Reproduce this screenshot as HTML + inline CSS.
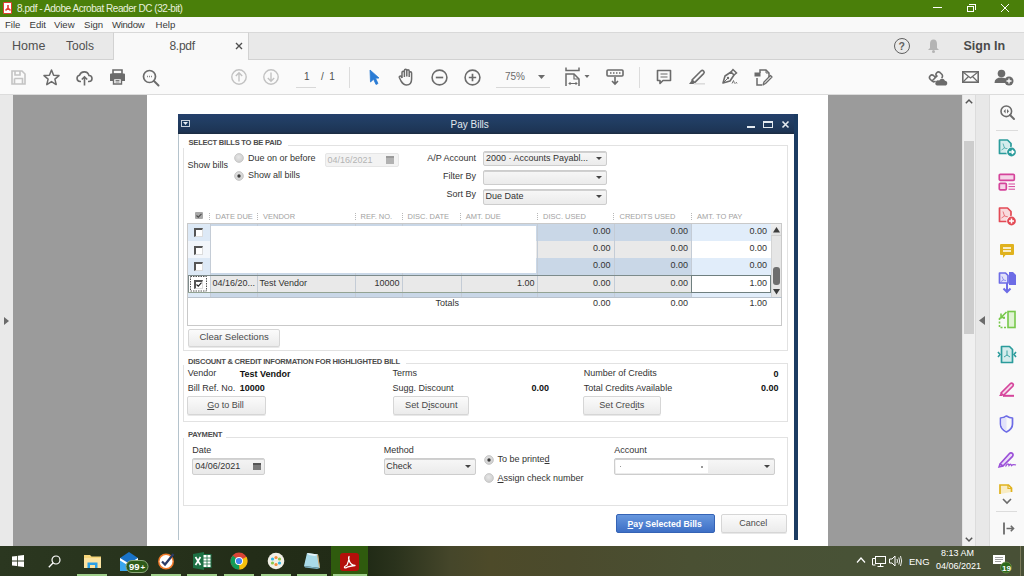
<!DOCTYPE html>
<html><head><meta charset="utf-8">
<style>
*{box-sizing:border-box;margin:0;padding:0}
html,body{width:1024px;height:576px;overflow:hidden;background:#f9f9f9;font-family:"Liberation Sans",sans-serif}
.a{position:absolute}
.t{position:absolute;white-space:nowrap;line-height:1}
svg{position:absolute;overflow:visible}
</style></head><body>
<!-- title bar -->
<div class="a" style="left:0;top:0;width:1024px;height:17px;background:#4a7f0a"></div>
<div class="a" style="left:3px;top:2px;width:9px;height:12px;background:#fff;border:1.5px solid #e03c31;border-radius:1px"></div>
<svg style="left:4px;top:4px" width="8" height="8" viewBox="0 0 8 8"><path d="M4 1 L4 4 M4 4 L1.5 6.5 M4 4 L6.5 6.5" stroke="#e03c31" stroke-width="1.6" fill="none"/></svg>
<div class="t" style="left:17px;top:4px;font-size:10px;color:#e8f0de;letter-spacing:-0.45px">8.pdf - Adobe Acrobat Reader DC (32-bit)</div>
<div class="a" style="left:933px;top:7px;width:9px;height:1px;background:#fff"></div>
<div class="a" style="left:967px;top:6px;width:7px;height:6px;border:1px solid #fff"></div>
<div class="a" style="left:969px;top:4px;width:7px;height:6px;border-top:1px solid #fff;border-right:1px solid #fff"></div>
<svg style="left:1001px;top:4px" width="8" height="8" viewBox="0 0 8 8"><path d="M0 0L8 8M8 0L0 8" stroke="#fff" stroke-width="1"/></svg>
<!-- menu bar -->
<div class="a" style="left:0;top:17px;width:1024px;height:15px;background:#f9f9f9"></div>
<div class="t" style="left:5px;top:20.2px;font-size:9.6px;color:#3a3a3a">File</div>
<div class="t" style="left:29.5px;top:20.2px;font-size:9.6px;color:#3a3a3a">Edit</div>
<div class="t" style="left:54px;top:20.2px;font-size:9.6px;color:#3a3a3a">View</div>
<div class="t" style="left:84px;top:20.2px;font-size:9.6px;color:#3a3a3a">Sign</div>
<div class="t" style="left:112px;top:20.2px;font-size:9.6px;color:#3a3a3a;letter-spacing:-0.3px">Window</div>
<div class="t" style="left:155.5px;top:20.2px;font-size:9.6px;color:#3a3a3a">Help</div>
<!-- tab bar -->
<div class="a" style="left:0;top:32px;width:1024px;height:28px;background:#e9e9e9;border-top:1px solid #d9d9d9;border-bottom:1px solid #d2d2d2"></div>
<div class="a" style="left:113px;top:32px;width:136px;height:28px;background:#f9f9f9;border-left:1px solid #d2d2d2;border-right:1px solid #d2d2d2;border-top:1px solid #d9d9d9"></div>
<div class="t" style="left:12px;top:40px;font-size:12.5px;color:#505050">Home</div>
<div class="t" style="left:66px;top:40px;font-size:12px;color:#505050">Tools</div>
<div class="t" style="left:169.5px;top:40px;font-size:12px;color:#505050;letter-spacing:-0.3px">8.pdf</div>
<svg style="left:236px;top:43px" width="6" height="6" viewBox="0 0 6 6"><path d="M0 0L6 6M6 0L0 6" stroke="#505050" stroke-width="1.4"/></svg>
<div class="a" style="left:894px;top:38px;width:16px;height:16px;border:1.5px solid #606060;border-radius:50%"></div>
<div class="t" style="left:898.5px;top:40.5px;font-size:10.5px;font-weight:700;color:#606060">?</div>
<svg style="left:927px;top:39px" width="13" height="14" viewBox="0 0 13 14"><path d="M6.5 0.5C4 0.5 3 2.5 3 5L3 9L1 11L12 11L10 9L10 5C10 2.5 9 0.5 6.5 0.5Z" fill="#b4b4b4"/><circle cx="6.5" cy="12.5" r="1.5" fill="#b4b4b4"/></svg>
<div class="t" style="left:963.5px;top:40px;font-size:12.5px;font-weight:700;color:#4b4b4b;letter-spacing:0px">Sign In</div>
<!-- toolbar -->
<div class="a" style="left:0;top:60px;width:1024px;height:35px;background:#fafafa;border-bottom:1px solid #dcdcdc"></div>

<!-- toolbar icons -->
<svg style="left:11px;top:70px" width="15" height="15" viewBox="0 0 15 15"><path d="M1 1H11L14 4V14H1Z M4 1V5H9V1 M3.5 8.5H11.5V14 M3.5 8.5V14" stroke="#c4c4c4" stroke-width="1.6" fill="none"/></svg>
<svg style="left:43px;top:69px" width="17" height="17" viewBox="0 0 17 17"><path d="M8.5 1L10.6 6.3L16 6.6L11.9 10.1L13.2 15.6L8.5 12.6L3.8 15.6L5.1 10.1L1 6.6L6.4 6.3Z" stroke="#6b6b6b" stroke-width="1.5" fill="none" stroke-linejoin="round"/></svg>
<svg style="left:76px;top:70px" width="17" height="16" viewBox="0 0 17 16"><path d="M5 11.5H4A3.2 3.2 0 0 1 3.5 5.2A5 5 0 0 1 13 5.5A3 3 0 0 1 13 11.5H12" stroke="#6b6b6b" stroke-width="1.6" fill="none"/><path d="M8.5 15.5V7M5.8 9.5L8.5 6.8L11.2 9.5" stroke="#6b6b6b" stroke-width="1.6" fill="none"/></svg>
<svg style="left:109px;top:69px" width="17" height="16" viewBox="0 0 17 16"><path d="M4 1H13V5H4Z" stroke="#6b6b6b" stroke-width="1.6" fill="none"/><path d="M1 5.5Q1 4.5 2 4.5H15Q16 4.5 16 5.5V12H13V9H4V12H1Z" fill="#6b6b6b"/><path d="M4.5 9.5H12.5V15H4.5Z" stroke="#6b6b6b" stroke-width="1.4" fill="none"/><path d="M6.5 11.5H10.5M6.5 13H10.5" stroke="#6b6b6b" stroke-width="0.9"/></svg>
<svg style="left:142px;top:69px" width="18" height="18" viewBox="0 0 18 18"><circle cx="7.5" cy="7.5" r="6" stroke="#6b6b6b" stroke-width="1.7" fill="none"/><path d="M12 12L16.5 16.5" stroke="#6b6b6b" stroke-width="2" stroke-linecap="round"/><path d="M5 7.5H5.8M7.1 7.5H7.9M9.2 7.5H10" stroke="#6b6b6b" stroke-width="1.3"/></svg>
<svg style="left:231px;top:69px" width="16" height="16" viewBox="0 0 16 16"><circle cx="8" cy="8" r="7.2" stroke="#c2c2c2" stroke-width="1.4" fill="none"/><path d="M8 12.5V4M4.8 7L8 3.8L11.2 7" stroke="#c2c2c2" stroke-width="1.4" fill="none"/></svg>
<svg style="left:263px;top:69px" width="16" height="16" viewBox="0 0 16 16"><circle cx="8" cy="8" r="7.2" stroke="#c2c2c2" stroke-width="1.4" fill="none"/><path d="M8 3.5V12M4.8 9L8 12.2L11.2 9" stroke="#c2c2c2" stroke-width="1.4" fill="none"/></svg>
<div class="t" style="left:304px;top:72px;font-size:10px;color:#505050">1</div>
<div class="a" style="left:296px;top:87px;width:20px;height:1px;background:#d8d8d8"></div>
<div class="t" style="left:321px;top:72px;font-size:10px;color:#505050">/ &nbsp;1</div>
<div class="a" style="left:349px;top:67px;width:1px;height:21px;background:#dcdcdc"></div>
<svg style="left:369px;top:69px" width="11" height="16" viewBox="0 0 11 16"><path d="M1 1L10 9L6.5 9.2L9 14.5L7 15.5L4.6 10.2L1.5 13Z" fill="#2a7bd4" stroke="#2a7bd4" stroke-width="0.8" stroke-linejoin="round"/></svg>
<svg style="left:398px;top:68px" width="17" height="18" viewBox="0 0 17 18"><path d="M4 10V4.5A1.2 1.2 0 0 1 6.4 4.5V9M6.4 8V2.5A1.2 1.2 0 0 1 8.8 2.5V8.5M8.8 8V3A1.2 1.2 0 0 1 11.2 3V9M11.2 8.5V5A1.2 1.2 0 0 1 13.6 5V11C13.6 15 11.5 17 8.5 17C5.5 17 4.5 15.5 3 13L1.3 9.5A1.1 1.1 0 0 1 3.3 8.6L4 10" stroke="#6b6b6b" stroke-width="1.5" fill="none" stroke-linejoin="round"/></svg>
<svg style="left:431px;top:69px" width="17" height="17" viewBox="0 0 17 17"><circle cx="8.5" cy="8.5" r="7.4" stroke="#6b6b6b" stroke-width="1.6" fill="none"/><path d="M4.8 8.5H12.2" stroke="#6b6b6b" stroke-width="1.7"/></svg>
<svg style="left:464px;top:69px" width="17" height="17" viewBox="0 0 17 17"><circle cx="8.5" cy="8.5" r="7.4" stroke="#6b6b6b" stroke-width="1.6" fill="none"/><path d="M4.8 8.5H12.2M8.5 4.8V12.2" stroke="#6b6b6b" stroke-width="1.7"/></svg>
<div class="t" style="left:505px;top:72px;font-size:10px;color:#6b6b6b">75%</div>
<svg style="left:538px;top:75px" width="7" height="4" viewBox="0 0 7 4"><path d="M0 0H7L3.5 4Z" fill="#6b6b6b"/></svg>
<div class="a" style="left:496px;top:87px;width:54px;height:1px;background:#d8d8d8"></div>
<svg style="left:565px;top:67px" width="26" height="20" viewBox="0 0 26 20"><path d="M1 0.5V3.5H14V0.5" stroke="#6b6b6b" stroke-width="1.5" fill="none"/><path d="M1 19V7H9L14 12V19" stroke="#6b6b6b" stroke-width="1.5" fill="none"/><path d="M9 7V12H14" stroke="#6b6b6b" stroke-width="1.2" fill="none"/><path d="M4 16.5H12M5.5 15L4 16.5L5.5 18M10.5 15L12 16.5L10.5 18" stroke="#6b6b6b" stroke-width="1" fill="none"/><path d="M19.5 8H24.5L22 11Z" fill="#6b6b6b"/></svg>
<svg style="left:606px;top:69px" width="18" height="16" viewBox="0 0 18 16"><rect x="1" y="1" width="16" height="6" rx="1" stroke="#6b6b6b" stroke-width="1.6" fill="none"/><path d="M4 4H5.5M7 4H8.5M10 4H11.5M13 4H14.5" stroke="#6b6b6b" stroke-width="1.4"/><path d="M9 8V15M6 12L9 15L12 12" stroke="#6b6b6b" stroke-width="1.6" fill="none"/></svg>
<div class="a" style="left:639px;top:67px;width:1px;height:21px;background:#dcdcdc"></div>
<svg style="left:656px;top:69px" width="16" height="16" viewBox="0 0 16 16"><path d="M1.5 1.5H14.5V11.5H7L4 14.5V11.5H1.5Z" stroke="#6b6b6b" stroke-width="1.6" fill="none" stroke-linejoin="round"/><path d="M4.5 5H11.5M4.5 8H11.5" stroke="#6b6b6b" stroke-width="1.1"/></svg>
<svg style="left:688px;top:69px" width="18" height="16" viewBox="0 0 18 16"><path d="M4 11L13 2A1.8 1.8 0 0 1 15.6 4.6L6.6 13.6Z" stroke="#6b6b6b" stroke-width="1.6" fill="none" stroke-linejoin="round"/><path d="M4 11L1 15H5.5L6.6 13.6" fill="#6b6b6b"/><path d="M6 14.8H17" stroke="#dcdcdc" stroke-width="1.6"/></svg>
<svg style="left:721px;top:68px" width="18" height="17" viewBox="0 0 18 17"><path d="M2 15L4 8L10 4L13 7L9 13Z" stroke="#6b6b6b" stroke-width="1.6" fill="none" stroke-linejoin="round"/><path d="M10 4L12 1.5L15.5 5L13 7" stroke="#6b6b6b" stroke-width="1.5" fill="none"/><circle cx="7" cy="10" r="1.2" fill="#6b6b6b"/><path d="M2 15L6.2 10.8" stroke="#6b6b6b" stroke-width="1"/><path d="M11 15.5L12.5 12.5L13.5 15.5M14.5 15.5Q15.5 13 16 15.5" stroke="#6b6b6b" stroke-width="0.9" fill="none"/></svg>
<svg style="left:754px;top:69px" width="19" height="18" viewBox="0 0 19 18"><path d="M6 4V1H12L15 4V8" stroke="#6b6b6b" stroke-width="1.5" fill="none"/><path d="M12 1V4H15" stroke="#6b6b6b" stroke-width="1" fill="none"/><rect x="0.5" y="3.5" width="6" height="4" fill="#6b6b6b"/><path d="M3 9V16H8" stroke="#6b6b6b" stroke-width="1.5" fill="none"/><path d="M9 16L10 13L16.5 6.5L18 8L11.5 14.5Z" stroke="#6b6b6b" stroke-width="1.3" fill="none" stroke-linejoin="round"/></svg>
<svg style="left:928px;top:69px" width="19" height="17" viewBox="0 0 19 17"><path d="M7.5 6.5L5.5 4.5A2.5 2.5 0 0 0 2 8L4 10A2.5 2.5 0 0 0 7.5 10M4.5 9.5L9.5 4.5M6.5 7L8.5 5A2.5 2.5 0 0 1 12 1.5L14 3.5A2.5 2.5 0 0 1 13.5 7" stroke="#6b6b6b" stroke-width="1.6" fill="none" transform="translate(0,2)"/><path d="M9 16.5H18A2.5 2.5 0 0 0 17 11.8A3.2 3.2 0 0 0 11.2 11.5A2.5 2.5 0 0 0 9 16.5Z" fill="#6b6b6b"/></svg>
<svg style="left:962px;top:71px" width="17" height="12" viewBox="0 0 17 12"><rect x="0.8" y="0.8" width="15.4" height="10.4" stroke="#6b6b6b" stroke-width="1.6" fill="none"/><path d="M1 1L8.5 7L16 1M1 11L6.5 5.5M16 11L10.5 5.5" stroke="#6b6b6b" stroke-width="1.2" fill="none"/></svg>
<svg style="left:994px;top:69px" width="20" height="17" viewBox="0 0 20 17"><circle cx="7.5" cy="4.5" r="3.8" fill="#6b6b6b"/><path d="M0.5 14Q0.5 8.5 7.5 8.5Q11 8.5 12.5 10L11 14Z" fill="#6b6b6b"/><circle cx="15" cy="12" r="4.5" fill="#6b6b6b"/><path d="M15 9.5V14.5M12.5 12H17.5" stroke="#fff" stroke-width="1.3"/></svg>

<!-- document area -->
<div class="a" style="left:0;top:95px;width:13px;height:451px;background:#e9e9e9"></div>
<svg style="left:4px;top:316.5px" width="5" height="8" viewBox="0 0 5 8"><path d="M0 0L5 4L0 8Z" fill="#6b6b6b"/></svg>
<div class="a" style="left:13px;top:95px;width:949px;height:451px;background:#9b9b9b"></div>
<div class="a" style="left:147px;top:95px;width:681px;height:451px;background:#fff"></div>
<div class="a" style="left:962px;top:95px;width:14px;height:451px;background:#f0f0f0;border-left:1px solid #e4e4e4;border-right:1px solid #dcdcdc"></div>
<div class="a" style="left:964px;top:141px;width:10px;height:193px;background:#cdcdcd"></div>
<svg style="left:965px;top:99px" width="8" height="5" viewBox="0 0 8 5"><path d="M0.8 4.2L4 1L7.2 4.2" stroke="#555" stroke-width="1.5" fill="none"/></svg>
<svg style="left:965px;top:537px" width="8" height="5" viewBox="0 0 8 5"><path d="M0.8 0.8L4 4L7.2 0.8" stroke="#555" stroke-width="1.5" fill="none"/></svg>
<div class="a" style="left:976px;top:95px;width:14px;height:451px;background:#e8e8e8;border-right:1px solid #dcdcdc"></div>
<svg style="left:979px;top:316px" width="6" height="9" viewBox="0 0 6 9"><path d="M6 0L0 4.5L6 9Z" fill="#6b6b6b"/></svg>
<div class="a" style="left:990px;top:96px;width:34px;height:450px;background:#f9f9f9"></div>
<svg style="left:1000px;top:105px" width="15" height="15" viewBox="0 0 15 15"><circle cx="6.3" cy="6.3" r="5.3" stroke="#6b6b6b" stroke-width="1.6" fill="none"/><path d="M10 10L14 14" stroke="#6b6b6b" stroke-width="2" stroke-linecap="round"/><path d="M5.6 4L3.6 6.3L5.6 8.6ZM7 4L9 6.3L7 8.6Z" fill="#6b6b6b"/></svg>
<div class="a" style="left:996px;top:130px;width:22px;height:1px;background:#dcdcdc"></div>
<svg style="left:998px;top:139px" width="19" height="18" viewBox="0 0 19 18"><path d="M1.5 1H9.5L13 4.5V14.5H1.5Z" stroke="#2b9c9c" stroke-width="1.7" fill="#d4ecec" stroke-linejoin="round"/><path d="M5 4.5L6.5 9L3.5 11M6.5 9L10 10" stroke="#2b9c9c" stroke-width="0.7" fill="none"/><circle cx="13.5" cy="13" r="5.2" fill="#f9f9f9"/><circle cx="13.5" cy="13" r="4.4" fill="#2b9c9c"/><path d="M11 13H15.5M13.8 11L15.8 13L13.8 15" stroke="#fff" stroke-width="1.4" fill="none"/></svg>
<svg style="left:998px;top:173px" width="18" height="18" viewBox="0 0 18 18"><rect x="1.3" y="1.3" width="15" height="6" rx="1" stroke="#d5449b" stroke-width="1.7" fill="#f5d5e8"/><rect x="1.3" y="10.3" width="7" height="6.5" rx="1" stroke="#d5449b" stroke-width="1.7" fill="#f5d5e8"/><path d="M10.5 11H17M10.5 13.6H17M10.5 16.2H17" stroke="#d5449b" stroke-width="1"/></svg>
<svg style="left:998px;top:207px" width="19" height="18" viewBox="0 0 19 18"><path d="M1.5 1H9.5L13 4.5V14.5H1.5Z" stroke="#e34a55" stroke-width="1.7" fill="#f8dadd" stroke-linejoin="round"/><path d="M5 4.5L6.5 9L3.5 11M6.5 9L10 10" stroke="#e34a55" stroke-width="0.7" fill="none"/><circle cx="13.5" cy="14" r="5.2" fill="#f9f9f9"/><circle cx="13.5" cy="14" r="4.4" fill="#e34a55"/><path d="M11 14H16M13.5 11.5V16.5" stroke="#fff" stroke-width="1.5"/></svg>
<svg style="left:999px;top:243px" width="16" height="17" viewBox="0 0 16 17"><path d="M1 2Q1 1 2 1H14Q15 1 15 2V11Q15 12 14 12H6.5L4 15V12H2Q1 12 1 11Z" fill="#e0b21e"/><path d="M4 5H12M4 8H12" stroke="#fff" stroke-width="1.4"/></svg>
<svg style="left:998px;top:271px" width="19" height="24" viewBox="0 0 19 24"><path d="M1.5 2H7.5L10 4.5V12H1.5Z" stroke="#6d6ce6" stroke-width="1.7" fill="#e2e2fa" stroke-linejoin="round"/><path d="M4 5.5L5.5 9L3 10.5M5.5 9L8 9.5" stroke="#6d6ce6" stroke-width="0.7" fill="none"/><path d="M11 1H15L18 4V14H11Z" fill="#6d6ce6"/><path d="M9 12V21M5.5 17.5L9 21L12.5 17.5" stroke="#6d6ce6" stroke-width="2" fill="none"/></svg>
<svg style="left:998px;top:310px" width="18" height="19" viewBox="0 0 18 19"><rect x="10" y="1.5" width="7" height="16" stroke="#77c84a" stroke-width="1.6" fill="#e0f3d4"/><path d="M1.5 8V17.5H8M1.5 8H8" stroke="#77c84a" stroke-width="1.6" stroke-dasharray="2 1.5" fill="none"/><path d="M8.5 2L3 7.5M3 3.5V7.5H7" stroke="#77c84a" stroke-width="1.6" fill="none"/></svg>
<svg style="left:997px;top:345px" width="20" height="19" viewBox="0 0 20 19"><path d="M4.5 1.5H12.5L15.5 4.5V17.5H4.5Z" stroke="#2b9c9c" stroke-width="1.7" fill="#d4ecec" stroke-linejoin="round"/><path d="M1 7L3 9.5L1 12M19 7L17 9.5L19 12" stroke="#2b9c9c" stroke-width="1.6" fill="none"/><path d="M10 5.5L10 10L7 12M10 10L13 12" stroke="#2b9c9c" stroke-width="0.9" fill="none"/></svg>
<svg style="left:998px;top:380px" width="17" height="17" viewBox="0 0 17 17"><path d="M3 13L12.5 3.5A1.8 1.8 0 0 1 15 6L5.5 15.5Z" stroke="#d5449b" stroke-width="1.7" fill="#f5d5e8" stroke-linejoin="round"/><path d="M3 13L1 16H4.5" fill="#d5449b"/><path d="M5 15.8H16" stroke="#d5449b" stroke-width="2"/></svg>
<svg style="left:999px;top:415px" width="15" height="18" viewBox="0 0 15 18"><path d="M7.5 1Q4.5 3 1.5 3V9Q1.5 14 7.5 17Q13.5 14 13.5 9V3Q10.5 3 7.5 1Z" stroke="#6d6ce6" stroke-width="1.7" fill="none" stroke-linejoin="round"/><path d="M7.5 1.8V16.2Q2.3 13.5 2.3 9V3.8Q5 3.8 7.5 1.8Z" fill="#e2e2fa"/></svg>
<svg style="left:998px;top:450px" width="19" height="18" viewBox="0 0 19 18"><path d="M2 14L11.5 3.5A2 2 0 0 1 14.5 6.3L5 16Z" stroke="#9b4fd8" stroke-width="1.7" fill="#eadcf8" stroke-linejoin="round"/><path d="M2 14L1 17L5 16" stroke="#9b4fd8" stroke-width="1.5" fill="none"/><path d="M7.5 16.5Q10 12 11 15.5Q12.5 13 13.5 15.5Q15 14 18 15" stroke="#9b4fd8" stroke-width="1.3" fill="none"/></svg>
<svg style="left:999px;top:484px" width="16" height="10" viewBox="0 0 16 10"><path d="M1 10V1H9.5L12.5 4V8" stroke="#e0b21e" stroke-width="1.7" fill="#f8ecc4"/><path d="M9 1V4.5H12.5" stroke="#e0b21e" stroke-width="1.2" fill="none"/></svg>
<div class="a" style="left:990px;top:494px;width:34px;height:14px;background:#f9f9f9"></div>
<svg style="left:1002px;top:498px" width="10" height="6" viewBox="0 0 10 6"><path d="M1 1L5 5L9 1" stroke="#6b6b6b" stroke-width="1.6" fill="none"/></svg>
<div class="a" style="left:996px;top:511px;width:21px;height:1px;background:#dcdcdc"></div>
<svg style="left:1003px;top:522px" width="12" height="13" viewBox="0 0 12 13"><path d="M1 0.5V12.5" stroke="#6b6b6b" stroke-width="1.8"/><path d="M3.5 6.5H10.5M7.8 3.8L10.5 6.5L7.8 9.2" stroke="#6b6b6b" stroke-width="1.6" fill="none"/></svg>

<!-- taskbar -->
<div class="a" style="left:0;top:546px;width:1024px;height:30px;background:linear-gradient(90deg,#2b3720 0px,#28341d 120px,#232d18 250px,#212b16 368px,#2a321c 395px,#45462a 450px,#4d4a29 490px,#4b4b2d 570px,#4a5033 690px,#485236 850px,#485036 1024px)"></div>
<div class="a" style="left:331px;top:546px;width:37px;height:30px;background:#2f5b0e"></div>
<svg style="left:12px;top:555px" width="12" height="12" viewBox="0 0 12 12"><path d="M0 1.6L5 0.9V5.6H0ZM5.8 0.8L12 0V5.6H5.8ZM0 6.4H5V11.1L0 10.4ZM5.8 6.4H12V12L5.8 11.2Z" fill="#fff"/></svg>
<svg style="left:48px;top:555px" width="13" height="13" viewBox="0 0 13 13"><circle cx="8" cy="5" r="4" stroke="#fff" stroke-width="1.2" fill="none"/><path d="M5.2 7.8L0.8 12.2" stroke="#fff" stroke-width="1.3"/></svg>
<svg style="left:84px;top:554px" width="17" height="14" viewBox="0 0 17 14"><path d="M0 1H6L7.5 2.5H17V14H0Z" fill="#f6d67a"/><path d="M0 4H17V14H0Z" fill="#fbe3a0"/><path d="M3.5 14V8.5H13.5V14H11V11H6V14Z" fill="#2aa0e6"/></svg>
<div class="a" style="left:77px;top:574px;width:30px;height:2px;background:#9fcf8a"></div>
<svg style="left:120px;top:552px" width="30" height="22" viewBox="0 0 30 22"><path d="M0 6L9 0L18 6V17H0Z" fill="#1a73c8"/><path d="M0 7L9 12.5L18 7V19H0Z" fill="#3aa6ee"/><path d="M0 6L9 11.5L18 6V8.5L9 14L0 8.5Z" fill="#fff"/><rect x="6" y="8.5" width="22" height="12" rx="6" fill="#2e5a18" stroke="#8ba67a" stroke-width="1"/><text x="9" y="18" font-family="Liberation Sans" font-size="9.5" font-weight="700" fill="#fff">99</text><text x="20.5" y="18" font-family="Liberation Sans" font-size="8" font-weight="700" fill="#fff">+</text></svg>
<svg style="left:157px;top:552px" width="18" height="18" viewBox="0 0 18 18"><circle cx="9" cy="9.5" r="8" fill="#f07a2a"/><circle cx="9" cy="9.5" r="6.5" fill="#fff"/><path d="M5 9.5L8 12.5L16.5 2" stroke="#2a3a66" stroke-width="2.2" fill="none"/></svg>
<div class="a" style="left:151px;top:574px;width:30px;height:2px;background:#9fcf8a"></div>
<svg style="left:193px;top:552px" width="19" height="18" viewBox="0 0 19 18"><path d="M0 2L11 0V18L0 16Z" fill="#1d7044"/><rect x="10" y="2.5" width="8" height="13" fill="#fff" stroke="#1d7044" stroke-width="1"/><path d="M10 6H18M10 9H18M10 12H18M14 2.5V15.5" stroke="#1d7044" stroke-width="0.8"/><path d="M2.5 5L7.5 13M7.5 5L2.5 13" stroke="#fff" stroke-width="1.7"/></svg>
<div class="a" style="left:187px;top:574px;width:30px;height:2px;background:#9fcf8a"></div>
<svg style="left:230px;top:552px" width="18" height="18" viewBox="0 0 18 18"><circle cx="9" cy="9" r="8.5" fill="#db4437"/><path d="M9 9L1.6 13.3A8.5 8.5 0 0 0 9.5 17.5Z" fill="#0f9d58"/><path d="M9 9L9.5 17.5A8.5 8.5 0 0 0 16.4 4.8Z" fill="#f4c20d"/><path d="M9 9L1.6 13.3A8.5 8.5 0 0 1 3 3.5Z" fill="#0f9d58"/><circle cx="9" cy="9" r="4" fill="#fff"/><circle cx="9" cy="9" r="3.1" fill="#4285f4"/></svg>
<div class="a" style="left:224px;top:574px;width:30px;height:2px;background:#9fcf8a"></div>
<svg style="left:267px;top:552px" width="18" height="18" viewBox="0 0 18 18"><circle cx="9" cy="9" r="8.3" fill="#f1efe6"/><circle cx="9" cy="5.5" r="1.6" fill="#f48c3c"/><circle cx="9" cy="12.5" r="1.6" fill="#f48c3c"/><circle cx="5.5" cy="7" r="1.6" fill="#31b8e8"/><circle cx="12.5" cy="7" r="1.6" fill="#8cc84b"/><circle cx="5.5" cy="11" r="1.6" fill="#8cc84b"/><circle cx="12.5" cy="11" r="1.6" fill="#31b8e8"/></svg>
<div class="a" style="left:261px;top:574px;width:30px;height:2px;background:#9fcf8a"></div>
<svg style="left:303px;top:552px" width="18" height="17" viewBox="0 0 18 17"><path d="M4 1L15 2.5L17 16L1 14Z" fill="#a9dbe8"/><path d="M4 1L15 2.5L12 4L6 3Z" fill="#e8f6fa"/><path d="M1 14L17 16L14 17L2 15.5Z" fill="#7fb5c8"/><path d="M15 2.5L17 16L16 15L14 3Z" fill="#d0a060"/></svg>
<div class="a" style="left:297px;top:574px;width:30px;height:2px;background:#9fcf8a"></div>
<div class="a" style="left:340px;top:553px;width:19px;height:18px;background:#b40f0a;border-radius:3px"></div>
<svg style="left:342px;top:555px" width="15" height="14" viewBox="0 0 15 14"><path d="M7 1.5Q6 3 7.5 6.5Q9 10 13 10.5Q10 10.8 6 11.8Q3.5 13.5 2.5 12.5Q2 11.5 5 10Q7 6 7 1.5Z" stroke="#fff" stroke-width="1.3" fill="none" stroke-linejoin="round"/></svg>
<div class="a" style="left:333px;top:574px;width:34px;height:2px;background:#9fcf8a"></div>
<svg style="left:856px;top:557px" width="10" height="6" viewBox="0 0 10 6"><path d="M1 5.5L5 1L9 5.5" stroke="#fff" stroke-width="1.2" fill="none"/></svg>
<svg style="left:872px;top:555px" width="14" height="13" viewBox="0 0 14 13"><rect x="3.5" y="1.5" width="10" height="7" stroke="#fff" stroke-width="1" fill="none"/><path d="M8.5 8.5V11M5.5 11.5H11.5M0.5 3.5H3.5M0.5 3.5V10H3.5" stroke="#fff" stroke-width="1" fill="none"/></svg>
<svg style="left:889px;top:555px" width="13" height="12" viewBox="0 0 13 12"><path d="M0.5 4H3L6 1V11L3 8H0.5Z" stroke="#fff" stroke-width="1" fill="none"/><path d="M8 4Q9 6 8 8M9.8 2.5Q11.5 6 9.8 9.5M11.5 1Q13.8 6 11.5 11" stroke="#fff" stroke-width="0.9" fill="none"/></svg>
<div class="t" style="left:909px;top:557px;font-size:9.5px;color:#fff">ENG</div>
<div class="t" style="left:941px;top:549px;font-size:9px;color:#fff">8:13 AM</div>
<div class="t" style="left:936px;top:562px;font-size:9px;color:#fff">04/06/2021</div>
<svg style="left:992px;top:554px" width="20" height="20" viewBox="0 0 20 20"><path d="M1 1H13V10H1Z" fill="#fff"/><path d="M3 3.5H11M3 5.5H11M3 7.5H9" stroke="#888" stroke-width="0.8"/><circle cx="14" cy="13.5" r="5.5" fill="#2d6a1a" stroke="#6b8f4a" stroke-width="0.8"/><text x="10" y="17" font-family="Liberation Sans" font-size="8" font-weight="700" fill="#fff">19</text></svg>
<div class="a" style="left:1020px;top:546px;width:1px;height:30px;background:#7a7a5a"></div>

<!-- DIALOG -->
<div class="a" style="left:178px;top:114px;width:620px;height:426px;background:#fff;border-left:1px solid #b5c3cc"></div>
<div class="a" style="left:178px;top:114px;width:620px;height:20px;background:linear-gradient(#243f6b 0%,#203c60 45%,#1d3454 88%,#1b2b40 100%)"></div>
<div class="a" style="left:794px;top:114px;width:4px;height:426px;background:#1c3c62"></div>
<div class="a" style="left:181px;top:120px;width:9px;height:7px;border:1px solid #c8d2dc;background:#1a3a5f"></div>
<svg style="left:183px;top:122px" width="5" height="3" viewBox="0 0 5 3"><path d="M0 0H5L2.5 3Z" fill="#e8eef4"/></svg>
<div class="t" style="left:450.5px;top:119.63px;font-size:10px;color:#e2e8ef;font-weight:400;">Pay Bills</div>
<div class="a" style="left:747px;top:126px;width:8px;height:2px;background:#e4eaf0"></div>
<div class="a" style="left:763px;top:121px;width:10px;height:7px;border:1px solid #e4eaf0;border-top-width:2px"></div>
<svg style="left:782px;top:121px" width="7" height="7" viewBox="0 0 7 7"><path d="M0.5 0.5L6.5 6.5M6.5 0.5L0.5 6.5" stroke="#e4eaf0" stroke-width="1.6"/></svg>
<div class="a" style="left:183px;top:145px;width:605px;height:206px;border:1px solid #e2e2e2"></div>
<div class="a" style="left:182px;top:138px;width:106px;height:10px;background:#fff"></div>
<div class="t" style="left:188.5px;top:139.27px;font-size:7.6px;color:#4d4d4d;font-weight:700;letter-spacing:-0.25px">SELECT BILLS TO BE PAID</div>
<div class="t" style="left:187.5px;top:161.28px;font-size:9px;color:#333;font-weight:400;">Show bills</div>
<svg style="left:233.3px;top:152.4px" width="12" height="12" viewBox="0 0 12 12"><defs><radialGradient id="rg1" cx="45%" cy="40%" r="60%"><stop offset="0" stop-color="#e6e6e6"/><stop offset="1" stop-color="#cdcdcd"/></radialGradient></defs><circle cx="6" cy="6" r="4.4" fill="url(#rg1)" stroke="#c2c2c2" stroke-width="0.8"/></svg>
<svg style="left:233.3px;top:169.8px" width="12" height="12" viewBox="0 0 12 12"><defs><radialGradient id="rg2" cx="45%" cy="40%" r="60%"><stop offset="0" stop-color="#e6e6e6"/><stop offset="1" stop-color="#cdcdcd"/></radialGradient></defs><circle cx="6" cy="6" r="4.4" fill="url(#rg2)" stroke="#c2c2c2" stroke-width="0.8"/><circle cx="6" cy="6" r="1.7" fill="#3a3a3a"/></svg>
<svg style="left:483px;top:453.8px" width="12" height="12" viewBox="0 0 12 12"><defs><radialGradient id="rg3" cx="45%" cy="40%" r="60%"><stop offset="0" stop-color="#e6e6e6"/><stop offset="1" stop-color="#cdcdcd"/></radialGradient></defs><circle cx="6" cy="6" r="4.4" fill="url(#rg3)" stroke="#c2c2c2" stroke-width="0.8"/><circle cx="6" cy="6" r="1.7" fill="#3a3a3a"/></svg>
<svg style="left:483px;top:472.4px" width="12" height="12" viewBox="0 0 12 12"><defs><radialGradient id="rg4" cx="45%" cy="40%" r="60%"><stop offset="0" stop-color="#e6e6e6"/><stop offset="1" stop-color="#cdcdcd"/></radialGradient></defs><circle cx="6" cy="6" r="4.4" fill="url(#rg4)" stroke="#c2c2c2" stroke-width="0.8"/></svg>
<div class="t" style="left:248px;top:153.58px;font-size:9px;color:#333;font-weight:400;">Due on or before</div>
<div class="t" style="left:248px;top:171.48px;font-size:9px;color:#333;font-weight:400;">Show all bills</div>
<div class="a" style="left:325px;top:152.5px;width:74px;height:14.5px;background:#f3f3f3;border:1px solid #e6e6e6;border-radius:2px"></div>
<div class="t" style="left:327.5px;top:155.58px;font-size:9px;color:#b4b4b4;font-weight:400;">04/16/2021</div>
<div class="a" style="left:386px;top:156px;width:8px;height:7.5px;background:#b2b2b2;border-top:2px solid #9a9a9a"></div>
<div class="t" style="left:276px;width:200px;text-align:right;top:153.98px;font-size:9px;color:#333;font-weight:400;">A/P Account</div>
<div class="t" style="left:276px;width:200px;text-align:right;top:171.58px;font-size:9px;color:#333;font-weight:400;">Filter By</div>
<div class="t" style="left:276px;width:200px;text-align:right;top:190.48px;font-size:9px;color:#333;font-weight:400;">Sort By</div>
<div class="a" style="left:483px;top:151px;width:124px;height:15px;background:linear-gradient(#f7f7f7,#ebebeb);border:1px solid #cdcdcd;border-radius:2px;box-shadow:inset 0 1px 0 #d0d0d0"></div>
<svg style="left:596px;top:157.0px" width="6" height="3" viewBox="0 0 6 3"><path d="M0 0H6L3 3Z" fill="#444"/></svg>
<div class="a" style="left:483px;top:169.5px;width:124px;height:15.5px;background:linear-gradient(#f7f7f7,#ebebeb);border:1px solid #cdcdcd;border-radius:2px;box-shadow:inset 0 1px 0 #d0d0d0"></div>
<svg style="left:596px;top:175.8px" width="6" height="3" viewBox="0 0 6 3"><path d="M0 0H6L3 3Z" fill="#444"/></svg>
<div class="a" style="left:483px;top:189px;width:124px;height:15.5px;background:linear-gradient(#f7f7f7,#ebebeb);border:1px solid #cdcdcd;border-radius:2px;box-shadow:inset 0 1px 0 #d0d0d0"></div>
<svg style="left:596px;top:195.2px" width="6" height="3" viewBox="0 0 6 3"><path d="M0 0H6L3 3Z" fill="#444"/></svg>
<div class="t" style="left:486px;top:153.98px;font-size:9px;color:#333;font-weight:400;">2000 · Accounts Payabl...</div>
<div class="t" style="left:485.5px;top:192.08px;font-size:9px;color:#333;font-weight:400;">Due Date</div>
<div class="a" style="left:195px;top:212px;width:8px;height:7px;background:#a8a8a8;border-radius:1px"></div>
<svg style="left:196px;top:213px" width="6" height="5" viewBox="0 0 6 5"><path d="M0.5 2.5L2.3 4.2L5.5 0.8" stroke="#505050" stroke-width="1.2" fill="none"/></svg>
<div class="a" style="left:209px;top:213px;width:1px;height:7px;background-image:linear-gradient(#b8b8b8 50%,transparent 50%);background-size:1px 2px"></div>
<div class="a" style="left:256.5px;top:213px;width:1px;height:7px;background-image:linear-gradient(#b8b8b8 50%,transparent 50%);background-size:1px 2px"></div>
<div class="a" style="left:355px;top:213px;width:1px;height:7px;background-image:linear-gradient(#b8b8b8 50%,transparent 50%);background-size:1px 2px"></div>
<div class="a" style="left:402px;top:213px;width:1px;height:7px;background-image:linear-gradient(#b8b8b8 50%,transparent 50%);background-size:1px 2px"></div>
<div class="a" style="left:460px;top:213px;width:1px;height:7px;background-image:linear-gradient(#b8b8b8 50%,transparent 50%);background-size:1px 2px"></div>
<div class="a" style="left:537px;top:213px;width:1px;height:7px;background-image:linear-gradient(#b8b8b8 50%,transparent 50%);background-size:1px 2px"></div>
<div class="a" style="left:613px;top:213px;width:1px;height:7px;background-image:linear-gradient(#b8b8b8 50%,transparent 50%);background-size:1px 2px"></div>
<div class="a" style="left:690.5px;top:213px;width:1px;height:7px;background-image:linear-gradient(#b8b8b8 50%,transparent 50%);background-size:1px 2px"></div>
<div class="t" style="left:215.5px;top:212.65px;font-size:7.5px;color:#a2a2a2;font-weight:400;">DATE DUE</div>
<div class="t" style="left:263px;top:212.65px;font-size:7.5px;color:#a2a2a2;font-weight:400;">VENDOR</div>
<div class="t" style="left:360.5px;top:212.65px;font-size:7.5px;color:#a2a2a2;font-weight:400;">REF. NO.</div>
<div class="t" style="left:407.5px;top:212.65px;font-size:7.5px;color:#a2a2a2;font-weight:400;">DISC. DATE</div>
<div class="t" style="left:465.75px;top:212.65px;font-size:7.5px;color:#a2a2a2;font-weight:400;">AMT. DUE</div>
<div class="t" style="left:543px;top:212.65px;font-size:7.5px;color:#a2a2a2;font-weight:400;">DISC. USED</div>
<div class="t" style="left:619.5px;top:212.65px;font-size:7.5px;color:#a2a2a2;font-weight:400;">CREDITS USED</div>
<div class="t" style="left:697px;top:212.65px;font-size:7.5px;color:#a2a2a2;font-weight:400;">AMT. TO PAY</div>
<div class="a" style="left:187px;top:223px;width:595px;height:103px;background:#fff;border:1px solid #c9c9c9"></div>
<div class="a" style="left:188px;top:224px;width:583px;height:17px;background:#c9d7e7"></div>
<div class="a" style="left:188px;top:224px;width:22px;height:17px;background:#dde9f6"></div>
<div class="a" style="left:691px;top:224px;width:80px;height:17px;background:#e1edfa"></div>
<div class="a" style="left:188px;top:241px;width:583px;height:17px;background:#e9e9e9"></div>
<div class="a" style="left:188px;top:241px;width:22px;height:17px;background:#f2f6fb"></div>
<div class="a" style="left:691px;top:241px;width:80px;height:17px;background:#fff"></div>
<div class="a" style="left:188px;top:258px;width:583px;height:17px;background:#c9d7e7"></div>
<div class="a" style="left:188px;top:258px;width:22px;height:17px;background:#dde9f6"></div>
<div class="a" style="left:691px;top:258px;width:80px;height:17px;background:#e1edfa"></div>
<div class="a" style="left:188px;top:275px;width:583px;height:17px;background:#e9e9e9"></div>
<div class="a" style="left:188px;top:275px;width:22px;height:17px;#fff"></div>
<div class="a" style="left:691px;top:275px;width:80px;height:17px;background:#fff"></div>
<div class="a" style="left:188px;top:292px;width:583px;height:6px;background:#c9d7e7"></div>
<div class="a" style="left:188px;top:292px;width:22px;height:6px;background:#dde9f6"></div>
<div class="a" style="left:691px;top:292px;width:80px;height:6px;background:#e1edfa"></div>
<div class="a" style="left:188px;top:275px;width:22px;height:17px;background:#fff"></div>
<div class="a" style="left:210px;top:224px;width:1px;height:74px;background:#c4ccd6"></div>
<div class="a" style="left:257px;top:224px;width:1px;height:74px;background:#c4ccd6"></div>
<div class="a" style="left:355px;top:224px;width:1px;height:74px;background:#c4ccd6"></div>
<div class="a" style="left:402px;top:224px;width:1px;height:74px;background:#c4ccd6"></div>
<div class="a" style="left:461px;top:224px;width:1px;height:74px;background:#c4ccd6"></div>
<div class="a" style="left:537px;top:224px;width:1px;height:74px;background:#c4ccd6"></div>
<div class="a" style="left:614px;top:224px;width:1px;height:74px;background:#c4ccd6"></div>
<div class="a" style="left:691px;top:224px;width:1px;height:74px;background:#c4ccd6"></div>
<div class="a" style="left:188px;top:274.5px;width:583px;height:1px;background:#7d8b8b"></div>
<div class="a" style="left:188px;top:291.5px;width:583px;height:1px;background:#93a393"></div>
<div class="a" style="left:691px;top:274.5px;width:80px;height:18px;border:1px solid #6f7f7f;background:#fff"></div>
<div class="a" style="left:188px;top:297px;width:594px;height:1px;background:#b9c2cc"></div>
<div class="a" style="left:211px;top:225.5px;width:325px;height:47.5px;background:#fff"></div>
<div class="a" style="left:194px;top:228px;width:9px;height:9px;background:#fff;border:1px solid #555;border-right-color:#dcdcdc;border-bottom-color:#dcdcdc;border-top-width:2px;border-left-width:2px"></div>
<div class="a" style="left:194px;top:245.5px;width:9px;height:9px;background:#fff;border:1px solid #555;border-right-color:#dcdcdc;border-bottom-color:#dcdcdc;border-top-width:2px;border-left-width:2px"></div>
<div class="a" style="left:194px;top:261.5px;width:9px;height:9px;background:#fff;border:1px solid #555;border-right-color:#dcdcdc;border-bottom-color:#dcdcdc;border-top-width:2px;border-left-width:2px"></div>
<div class="a" style="left:194px;top:279.5px;width:9px;height:9px;background:#fff;border:1px solid #555;border-right-color:#dcdcdc;border-bottom-color:#dcdcdc;border-top-width:2px;border-left-width:2px"></div>
<svg style="left:196px;top:281.5px" width="6" height="5" viewBox="0 0 6 5"><path d="M0.5 2.5L2.3 4.2L5.5 0.6" stroke="#222" stroke-width="1.1" fill="none"/></svg>
<svg style="left:190px;top:275.5px" width="17" height="15.5" viewBox="0 0 17 15.5"><rect x="0.5" y="0.5" width="16" height="14.5" stroke="#555" stroke-width="1" stroke-dasharray="1.5 1" fill="none"/></svg>
<div class="a" style="left:188px;top:275px;width:1px;height:17px;background:#7d8b8b"></div>
<div class="t" style="left:212.5px;top:278.78px;font-size:9px;color:#333;font-weight:400;">04/16/20...</div>
<div class="t" style="left:259.5px;top:278.78px;font-size:9px;color:#333;font-weight:400;">Test Vendor</div>
<div class="t" style="left:199.5px;width:200px;text-align:right;top:278.78px;font-size:9px;color:#333;font-weight:400;">10000</div>
<div class="t" style="left:334.5px;width:200px;text-align:right;top:278.78px;font-size:9px;color:#333;font-weight:400;">1.00</div>
<div class="t" style="left:410.5px;width:200px;text-align:right;top:227.38px;font-size:9px;color:#333;font-weight:400;">0.00</div>
<div class="t" style="left:488px;width:200px;text-align:right;top:227.38px;font-size:9px;color:#333;font-weight:400;">0.00</div>
<div class="t" style="left:410.5px;width:200px;text-align:right;top:244.13px;font-size:9px;color:#333;font-weight:400;">0.00</div>
<div class="t" style="left:488px;width:200px;text-align:right;top:244.13px;font-size:9px;color:#333;font-weight:400;">0.00</div>
<div class="t" style="left:410.5px;width:200px;text-align:right;top:261.13px;font-size:9px;color:#333;font-weight:400;">0.00</div>
<div class="t" style="left:488px;width:200px;text-align:right;top:261.13px;font-size:9px;color:#333;font-weight:400;">0.00</div>
<div class="t" style="left:410.5px;width:200px;text-align:right;top:278.63px;font-size:9px;color:#333;font-weight:400;">0.00</div>
<div class="t" style="left:488px;width:200px;text-align:right;top:278.63px;font-size:9px;color:#333;font-weight:400;">0.00</div>
<div class="t" style="left:567px;width:200px;text-align:right;top:227.38px;font-size:9px;color:#333;font-weight:400;">0.00</div>
<div class="t" style="left:567px;width:200px;text-align:right;top:244.13px;font-size:9px;color:#333;font-weight:400;">0.00</div>
<div class="t" style="left:567px;width:200px;text-align:right;top:261.13px;font-size:9px;color:#333;font-weight:400;">0.00</div>
<div class="t" style="left:567px;width:200px;text-align:right;top:278.63px;font-size:9px;color:#333;font-weight:400;">1.00</div>
<div class="a" style="left:771px;top:224px;width:10px;height:73px;background:#e6e6e6;border-left:1px solid #d4d4d4"></div>
<div class="a" style="left:771px;top:224px;width:10px;height:12px;background:linear-gradient(#f0f0f0,#e2e2e2);border-bottom:1px solid #d0d0d0"></div>
<svg style="left:773px;top:226.5px" width="7" height="5.5" viewBox="0 0 7 5.5"><path d="M0 5.5H7L3.5 0Z" fill="#3c3c3c"/></svg>
<div class="a" style="left:773px;top:266.5px;width:6.5px;height:18.5px;background:#6e6e6e;border-radius:3px"></div>
<svg style="left:773px;top:288.5px" width="7" height="5.5" viewBox="0 0 7 5.5"><path d="M0 0H7L3.5 5.5Z" fill="#3c3c3c"/></svg>
<div class="t" style="left:435.5px;top:299.38px;font-size:9px;color:#333;font-weight:400;">Totals</div>
<div class="t" style="left:410.5px;width:200px;text-align:right;top:299.38px;font-size:9px;color:#333;font-weight:400;">0.00</div>
<div class="t" style="left:488px;width:200px;text-align:right;top:299.38px;font-size:9px;color:#333;font-weight:400;">0.00</div>
<div class="t" style="left:567px;width:200px;text-align:right;top:299.38px;font-size:9px;color:#333;font-weight:400;">1.00</div>
<div class="a" style="left:187.5px;top:328.5px;width:92.5px;height:18.5px;background:linear-gradient(#fbfbfb,#ebebeb);border:1px solid #d6d6d6;border-radius:2px;box-shadow:0 1px 0 #e8e8e8"></div>
<div class="t" style="left:199.5px;top:332.46px;font-size:9.5px;color:#4a4a4a;font-weight:400;">Clear Selections</div>
<div class="a" style="left:183px;top:363px;width:605px;height:59px;border:1px solid #e2e2e2"></div>
<div class="a" style="left:182px;top:355px;width:224px;height:10px;background:#fff"></div>
<div class="t" style="left:188px;top:358.07px;font-size:7.6px;color:#4d4d4d;font-weight:700;letter-spacing:-0.25px">DISCOUNT &amp; CREDIT INFORMATION FOR HIGHLIGHTED BILL</div>
<div class="t" style="left:187.75px;top:369.38px;font-size:9px;color:#333;font-weight:400;">Vendor</div>
<div class="t" style="left:239.75px;top:370.38px;font-size:9px;color:#111;font-weight:700;">Test Vendor</div>
<div class="t" style="left:187.75px;top:383.63px;font-size:9px;color:#333;font-weight:400;">Bill Ref. No.</div>
<div class="t" style="left:239.75px;top:384.38px;font-size:9px;color:#111;font-weight:700;">10000</div>
<div class="a" style="left:187px;top:395.5px;width:78.5px;height:19px;background:linear-gradient(#fbfbfb,#ebebeb);border:1px solid #d6d6d6;border-radius:2px;box-shadow:0 1px 0 #e8e8e8"></div>
<div class="t" style="left:207.25px;top:401.13px;font-size:9px;color:#4a4a4a;font-weight:400;"><u>G</u>o to Bill</div>
<div class="t" style="left:392.5px;top:369.38px;font-size:9px;color:#333;font-weight:400;">Terms</div>
<div class="t" style="left:392.5px;top:383.63px;font-size:9px;color:#333;font-weight:400;">Sugg. Discount</div>
<div class="t" style="left:349px;width:200px;text-align:right;top:384.38px;font-size:9px;color:#111;font-weight:700;">0.00</div>
<div class="a" style="left:392.5px;top:395.5px;width:76.5px;height:19px;background:linear-gradient(#fbfbfb,#ebebeb);border:1px solid #d6d6d6;border-radius:2px;box-shadow:0 1px 0 #e8e8e8"></div>
<div class="t" style="left:405px;top:400.92px;font-size:9.25px;color:#4a4a4a;font-weight:400;">Set D<u>i</u>scount</div>
<div class="t" style="left:583.75px;top:369.38px;font-size:9px;color:#333;font-weight:400;">Number of Credits</div>
<div class="t" style="left:583.75px;top:383.63px;font-size:9px;color:#333;font-weight:400;">Total Credits Available</div>
<div class="t" style="left:578.5px;width:200px;text-align:right;top:370.38px;font-size:9px;color:#111;font-weight:700;">0</div>
<div class="t" style="left:578.5px;width:200px;text-align:right;top:384.38px;font-size:9px;color:#111;font-weight:700;">0.00</div>
<div class="a" style="left:583px;top:395.5px;width:77.5px;height:19px;background:linear-gradient(#fbfbfb,#ebebeb);border:1px solid #d6d6d6;border-radius:2px;box-shadow:0 1px 0 #e8e8e8"></div>
<div class="t" style="left:599.25px;top:401.13px;font-size:9.15px;color:#4a4a4a;font-weight:400;">Set Cred<u>i</u>ts</div>
<div class="a" style="left:183px;top:436.5px;width:605px;height:69px;border:1px solid #e2e2e2"></div>
<div class="a" style="left:182px;top:428px;width:44px;height:10px;background:#fff"></div>
<div class="t" style="left:188px;top:431.07px;font-size:7.6px;color:#4d4d4d;font-weight:700;letter-spacing:-0.25px">PAYMENT</div>
<div class="t" style="left:192.25px;top:446.13px;font-size:9px;color:#333;font-weight:400;">Date</div>
<div class="a" style="left:192px;top:458px;width:73px;height:16.5px;background:linear-gradient(#f4f4f4,#e9e9e9);border:1px solid #cfcfcf;border-radius:2px;box-shadow:inset 0 1px 0 #d4d4d4"></div>
<div class="t" style="left:195.25px;top:462.38px;font-size:9px;color:#333;font-weight:400;">04/06/2021</div>
<div class="a" style="left:252.5px;top:462.5px;width:8.5px;height:7.5px;background:#7a7a7a;border-top:2px solid #555"></div>
<div class="t" style="left:383.75px;top:446.13px;font-size:9px;color:#333;font-weight:400;">Method</div>
<div class="a" style="left:384px;top:458px;width:91.5px;height:16.5px;background:linear-gradient(#f7f7f7,#ebebeb);border:1px solid #cdcdcd;border-radius:2px;box-shadow:inset 0 1px 0 #d0d0d0"></div>
<svg style="left:464.5px;top:464.8px" width="6" height="3" viewBox="0 0 6 3"><path d="M0 0H6L3 3Z" fill="#444"/></svg>
<div class="t" style="left:386.25px;top:462.38px;font-size:9px;color:#333;font-weight:400;">Check</div>
<div class="t" style="left:497.5px;top:455.38px;font-size:9px;color:#333;font-weight:400;">To be printe<u>d</u></div>
<div class="t" style="left:497.5px;top:474.38px;font-size:9px;color:#333;font-weight:400;"><u>A</u>ssign check number</div>
<div class="t" style="left:614.25px;top:446.13px;font-size:9px;color:#333;font-weight:400;">Account</div>
<div class="a" style="left:614px;top:458px;width:160.5px;height:16.5px;background:linear-gradient(#f7f7f7,#ebebeb);border:1px solid #cdcdcd;border-radius:2px;box-shadow:inset 0 1px 0 #d0d0d0"></div>
<svg style="left:763.5px;top:464.8px" width="6" height="3" viewBox="0 0 6 3"><path d="M0 0H6L3 3Z" fill="#444"/></svg>
<div class="a" style="left:616px;top:460px;width:92px;height:13px;background:#fff"></div>
<div class="a" style="left:620px;top:466px;width:1px;height:1px;background:#999"></div>
<div class="a" style="left:701px;top:465.5px;width:1.5px;height:2px;background:#999"></div>
<div class="a" style="left:615.5px;top:513.75px;width:99.5px;height:19.5px;background:linear-gradient(#6797de,#3d6fc6);border:1px solid #3563b5;border-radius:2px"></div>
<div class="t" style="left:627.5px;top:519.64px;font-size:8.7px;color:#fff;font-weight:700;"><u>P</u>ay Selected Bills</div>
<div class="a" style="left:720.5px;top:513.75px;width:66.5px;height:19.5px;background:linear-gradient(#fbfbfb,#ebebeb);border:1px solid #d6d6d6;border-radius:2px;box-shadow:0 1px 0 #e8e8e8"></div>
<div class="t" style="left:739.25px;top:519.38px;font-size:9px;color:#4a4a4a;font-weight:400;">Cancel</div>
</body></html>
